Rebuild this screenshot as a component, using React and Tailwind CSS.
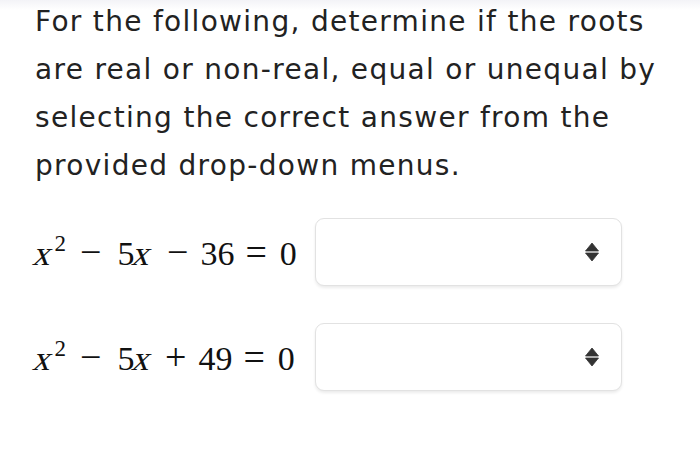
import React from "react";

function Arrows() {
  return (
    <svg width="14" height="20" viewBox="0 0 14 20" className="shrink-0">
      <path d="M7 1 L13.5 9 L0.5 9 Z" fill="#333" strokeLinejoin="round" stroke="#333" strokeWidth="0.8" />
      <path d="M0.5 11 L13.5 11 L7 19 Z" fill="#333" strokeLinejoin="round" stroke="#333" strokeWidth="0.8" />
    </svg>
  );
}

function Select() {
  return (
    <div className="w-[307px] h-[68px] rounded-[9px] border border-[#e2e2e2] bg-white shadow-[0_2px_3px_rgba(0,0,0,0.08)] flex items-center justify-end pr-[22px]">
      <Arrows />
    </div>
  );
}

function X() {
  return <span className="inline-block [transform:skewX(-16deg)] text-[35px]">x</span>;
}

function Eq({ c }) {
  return (
    <div className="w-[280px] text-[34px] leading-none text-[#111] whitespace-nowrap flex items-baseline" style={{ fontFamily: '"Liberation Serif", "DejaVu Serif", serif' }}>
      <X />
      <span className="text-[23px] relative top-[-14px] ml-[2px]">2</span>
      <span className="ml-[14px] mr-[16px] text-[38px]">−</span>
      <span>5</span>
      <X />
      <span className={c[0] === "+" ? "ml-[13px] mr-[12px] text-[38px]" : "ml-[15px] mr-[12px] text-[38px]"}>{c[0]}</span>
      <span>{c[1]}</span>
      <span className="ml-[11px] mr-[13px] text-[38px]">=</span>
      <span>0</span>
    </div>
  );
}

export default function App() {
  return (
    <div className="w-[700px] h-[471px] bg-white relative overflow-hidden">
      <div className="absolute top-0 left-0 right-0 h-[10px] bg-gradient-to-b from-[#f3f3f7] to-white" />
      <div className="relative pl-[35px] pt-0">
        <p className="text-[28px] leading-[48px] text-[#222] tracking-[1.3px] mt-[-2px]" style={{ fontFamily: '"DejaVu Sans", sans-serif' }}>
          For the following, determine if the roots<br />
          are real or non-real, equal or unequal by<br />
          selecting the correct answer from the<br />
          provided drop-down menus.
        </p>
        <div className="mt-[28px] flex items-center">
          <Eq c={["−", "36"]} />
          <Select />
        </div>
        <div className="mt-[37px] flex items-center">
          <Eq c={["+", "49"]} />
          <Select />
        </div>
      </div>
    </div>
  );
}
